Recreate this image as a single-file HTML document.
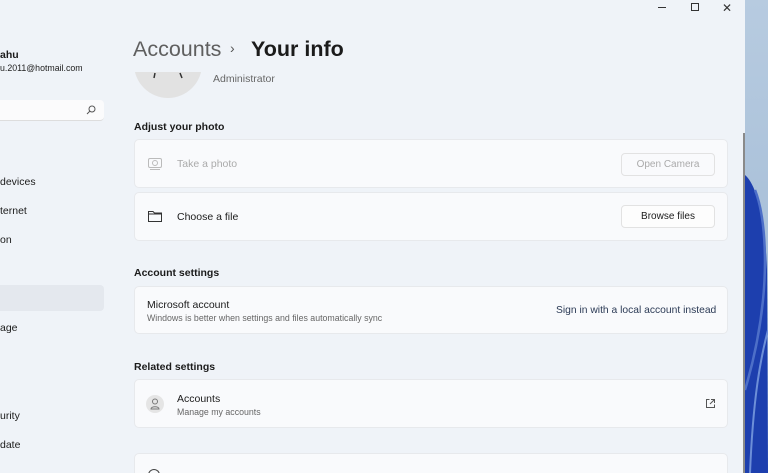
<!DOCTYPE html>
<html><head><style>
*{margin:0;padding:0;box-sizing:border-box}
html,body{width:768px;height:473px;overflow:hidden}
body{background:#eff3f8;font-family:"Segoe UI","Liberation Sans",sans-serif;position:relative;color:#1b1b1b}
.a{position:absolute}
.card{position:absolute;left:134px;width:594px;background:#f9fafc;border:1px solid #e7e9ec;border-radius:5px}
.t{font-size:10.5px;white-space:nowrap}
.s{font-size:8.8px;color:#666;white-space:nowrap}
.h{font-size:10.5px;font-weight:bold;white-space:nowrap}
.btn{position:absolute;border:1px solid #e2e2e2;border-radius:4px;background:#fdfdfd;font-size:10px;text-align:center;line-height:22px}
</style></head><body>
<div class="a" style="left:745px;top:0;width:23px;height:473px;background:linear-gradient(#b7cbe0,#9cb6d2)"></div>
<svg class="a" style="left:745px;top:0" width="23" height="473"><path d="M0 175 C12 185 20 220 22 270 L23 473 L0 473 Z" fill="#1d3fae"/><path d="M10 190 C20 215 22 260 18 300 C14 340 6 370 0 390" fill="none" stroke="#4d6fc8" stroke-width="2.5"/><path d="M23 330 C15 360 8 400 5 473" fill="none" stroke="#6d8fd8" stroke-width="2"/></svg>
<div class="a" style="left:0;top:0;width:743px;height:473px;background:#eff3f8"></div>
<div class="a" style="left:743px;top:0;width:2px;height:133px;background:#eff3f8"></div>
<div class="a" style="left:743px;top:133px;width:2px;height:340px;background:#8a8a8a"></div>
<div class="a" style="left:658px;top:7px;width:8px;height:1px;background:#333"></div>
<div class="a" style="left:691px;top:3px;width:8px;height:8px;border:1px solid #333"></div>
<div class="a" style="left:722px;top:1px;font-size:12px;color:#333">✕</div>
<div class="a h" style="left:0;top:49px;font-size:10.5px">ahu</div>
<div class="a" style="left:0;top:63px;font-size:8.8px;color:#222">u.2011@hotmail.com</div>
<div class="a" style="left:0;top:100px;width:104px;height:21px;background:#fbfbfc;border-radius:0 4px 4px 0;border-bottom:1px solid #ddd"></div>
<svg class="a" style="left:86px;top:105px" width="10" height="10"><circle cx="6" cy="4" r="3" fill="none" stroke="#555"/><line x1="4" y1="6" x2="1" y2="9" stroke="#555"/></svg>
<div class="a t" style="left:0;top:176px">devices</div>
<div class="a t" style="left:0;top:205px">ternet</div>
<div class="a t" style="left:0;top:234px">on</div>
<div class="a" style="left:0;top:285px;width:104px;height:26px;background:#e4e8ee;border-radius:0 4px 4px 0"></div>
<div class="a t" style="left:0;top:322px">age</div>
<div class="a t" style="left:0;top:410px">urity</div>
<div class="a t" style="left:0;top:439px">date</div>
<div class="a" style="left:134px;top:72px;width:68px;height:26px;overflow:hidden"><div style="width:68px;height:68px;border-radius:50%;background:#e2e2e2;margin-top:-42px"></div></div>
<svg class="a" style="left:150px;top:72px" width="36" height="8"><path d="M5 1 L4 6 M30 1 L32 6" stroke="#333" stroke-width="1.5"/></svg>
<div class="a" style="left:120px;top:30px;width:400px;height:42px;background:#eff3f8"></div>
<div class="a" style="left:133px;top:37px;font-size:21.5px;color:#5f5f5f;white-space:nowrap">Accounts</div>
<div class="a" style="left:230px;top:40px;font-size:14px;color:#555">›</div>
<div class="a" style="left:251px;top:37px;font-size:21.5px;font-weight:bold;color:#1b1b1b;white-space:nowrap">Your info</div>
<div class="a" style="left:213px;top:73px;font-size:10.5px;color:#666">Administrator</div>
<div class="a h" style="left:134px;top:121px">Adjust your photo</div>
<div class="card" style="top:139px;height:49px"></div>
<svg class="a" style="left:147px;top:157px" width="16" height="14"><rect x="1.5" y="1.5" width="13" height="9" rx="1.5" fill="none" stroke="#bbb"/><circle cx="8" cy="6" r="2.5" fill="none" stroke="#bbb"/><line x1="3" y1="12.5" x2="13" y2="12.5" stroke="#bbb"/></svg>
<div class="a t" style="left:177px;top:158px;color:#aaa">Take a photo</div>
<div class="btn" style="left:621px;top:153px;width:94px;height:23px;color:#aaa;background:#f9fafc">Open Camera</div>
<div class="card" style="top:192px;height:49px"></div>
<svg class="a" style="left:147px;top:209px" width="16" height="14"><path d="M1.5 2.5h4.5l1.5 1.5h7v8.5h-13z M1.5 5h13" fill="none" stroke="#333"/></svg>
<div class="a t" style="left:177px;top:211px">Choose a file</div>
<div class="btn" style="left:621px;top:205px;width:94px;height:23px">Browse files</div>
<div class="a h" style="left:134px;top:267px">Account settings</div>
<div class="card" style="top:286px;height:48px"></div>
<div class="a t" style="left:147px;top:299px">Microsoft account</div>
<div class="a s" style="left:147px;top:313px">Windows is better when settings and files automatically sync</div>
<div class="a" style="left:556px;top:305px;font-size:10.3px;color:#2b3a55;white-space:nowrap">Sign in with a local account instead</div>
<div class="a h" style="left:134px;top:361px">Related settings</div>
<div class="card" style="top:379px;height:49px"></div>
<div class="a" style="left:146px;top:395px;width:18px;height:18px;border-radius:50%;background:#e5e5e5"></div>
<svg class="a" style="left:150px;top:398px" width="10" height="12"><circle cx="5" cy="3.5" r="2.5" fill="none" stroke="#777"/><path d="M1 11c0-3 8-3 8 0z" fill="none" stroke="#777"/></svg>
<div class="a t" style="left:177px;top:393px">Accounts</div>
<div class="a s" style="left:177px;top:407px">Manage my accounts</div>
<svg class="a" style="left:705px;top:398px" width="11" height="11"><path d="M4.5 1.5h-3v8h8v-3M6 1.5h3.5v3.5M9.5 1.5l-4.5 4.5" fill="none" stroke="#555"/></svg>
<div class="card" style="top:453px;height:30px"></div>
<div class="a" style="left:148px;top:469px;width:12px;height:6px;border:1.5px solid #444;border-bottom:none;border-radius:6px 6px 0 0"></div>
</body></html>
